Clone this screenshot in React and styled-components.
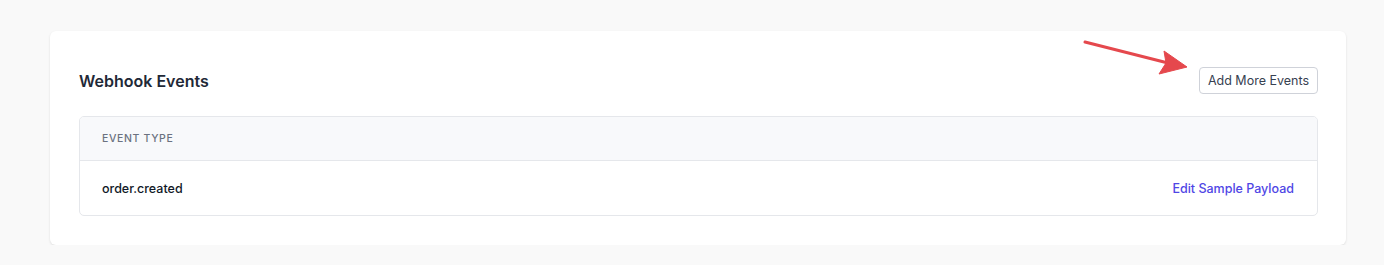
import React from "react";
import styled, { createGlobalStyle } from "styled-components";

const GlobalStyle = createGlobalStyle`
    body {
        margin: 0;
        background-color: #f9f9f9;
        font-family: Inter, "Noto Sans", sans-serif;
        -webkit-font-smoothing: antialiased;
    }
`

function Arrow () {
    return (
        <ArrowBox width="120" height="45" viewBox="0 0 120 45">
            <line x1="3" y1="3" x2="86" y2="24" stroke="#e5484d" strokeWidth="3" strokeLinecap="round" />
            <polygon points="105,28 77,35 84,24 82,12" fill="#e5484d" strokeLinejoin="round" stroke="#e5484d" strokeWidth="1" />
        </ArrowBox>
    );
}

export default function App () {
    return (
        <>
            <GlobalStyle />
            <Card>
                <Arrow />
                <CardHeader>
                    <Title>Webhook Events</Title>
                    <OutlineButton>Add More Events</OutlineButton>
                </CardHeader>
                <Table>
                    <HeadRow>
                        <HeadCell>Event Type</HeadCell>
                    </HeadRow>
                    <Row>
                        <EventName>order.created</EventName>
                        <LinkButton>Edit Sample Payload</LinkButton>
                    </Row>
                </Table>
            </Card>
        </>
    );
}

const Card = styled.div`
    position: relative;
    margin: 31px 38px 0 50px;
    background-color: #ffffff;
    border-radius: 6px;
    box-shadow: 0 1px 3px rgba(0, 0, 0, 0.08), 0 1px 2px rgba(0, 0, 0, 0.04);
    padding: 36px 28px 29px 29px;
`

const ArrowBox = styled.svg`
    position: absolute;
    left: 1032px;
    top: 8px;
`

const CardHeader = styled.div`
    display: flex;
    align-items: center;
    justify-content: space-between;
    margin-bottom: 22px;
`

const Title = styled.h2`
    margin: 0;
    font-size: 16px;
    font-weight: 600;
    color: #1f2937;
`

const OutlineButton = styled.button`
    height: 27px;
    padding: 0 8px;
    background-color: #ffffff;
    border: 1px solid #cfd2d9;
    border-radius: 4px;
    font-family: inherit;
    font-size: 12.5px;
    color: #374151;
`

const Table = styled.div`
    border: 1px solid #e5e7eb;
    border-radius: 5px;
    overflow: hidden;
`

const HeadRow = styled.div`
    display: flex;
    align-items: center;
    height: 43px;
    padding: 0 22px;
    background-color: #f8f9fb;
    border-bottom: 1px solid #e5e7eb;
`

const HeadCell = styled.div`
    font-size: 10.5px;
    font-weight: 500;
    letter-spacing: 0.06em;
    text-transform: uppercase;
    color: #6b7280;
`

const Row = styled.div`
    display: flex;
    align-items: center;
    justify-content: space-between;
    height: 54px;
    padding: 0 23px 0 22px;
`

const EventName = styled.div`
    font-size: 12.5px;
    font-weight: 500;
    color: #111827;
`

const LinkButton = styled.button`
    background: none;
    border: none;
    padding: 0;
    font-family: inherit;
    font-size: 12.5px;
    font-weight: 500;
    color: #4f46e5;
`
